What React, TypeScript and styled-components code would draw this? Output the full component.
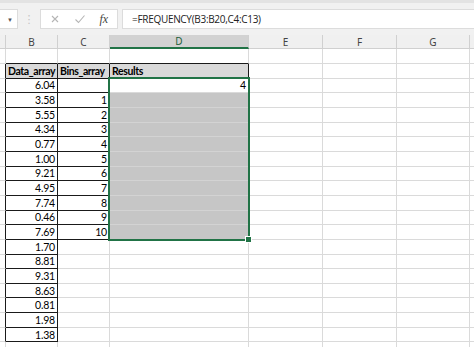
import styled, { createGlobalStyle } from "styled-components";

const GlobalStyle = createGlobalStyle`
  html, body {
    margin: 0;
    padding: 0;
    background: #fff;
    overflow: hidden;
  }
  body {
    font-family: Lato, "Liberation Sans", sans-serif;
  }
`;

const COLS = ["", "B", "C", "D", "E", "F", "G", ""];
const WIDTHS = [6, 52, 52, 139, 74, 74, 73];
const HEAD_H = 14.33;
const ROW_H = 14.67;
const ROWS = 21;

const dataArray = [
  "6.04", "3.58", "5.55", "4.34", "0.77", "1.00", "9.21", "4.95", "7.74",
  "0.46", "7.69", "1.70", "8.81", "9.31", "8.63", "0.81", "1.98", "1.38",
];

type CellInfo = { text?: string; bold?: boolean; header?: boolean; boxed?: boolean; selected?: boolean };

// row index 1-based like the sheet, col index into COLS
const cellAt = (r: number, c: number): CellInfo => {
  if (c === 1) {
    if (r === 2) return { text: "Data_array", bold: true, header: true, boxed: true };
    if (r >= 3 && r <= 20) return { text: dataArray[r - 3], boxed: true };
  }
  if (c === 2) {
    if (r === 2) return { text: "Bins_array", bold: true, header: true, boxed: true };
    if (r === 3) return { boxed: true };
    if (r >= 4 && r <= 13) return { text: String(r - 3), boxed: true };
  }
  if (c === 3) {
    if (r === 2) return { text: "Results", bold: true, header: true, boxed: true };
    if (r === 3) return { text: "4" };
    if (r >= 4 && r <= 13) return { selected: true };
  }
  return {};
};

const Window = styled.div`
  width: 474px;
  height: 347px;
  display: flex;
  flex-direction: column;
  overflow: hidden;
  background: #fff;
`;

const TopStrip = styled.div`
  flex-shrink: 0;
  height: 3px;
  background: #e3e3e3;
`;

const FormulaBar = styled.div`
  flex-shrink: 0;
  height: 32px;
  display: flex;
  align-items: center;
  background: #f1f1f1;
`;

const NameBox = styled.div`
  width: 18px;
  height: 20px;
  background: #fff;
  border: 1px solid #dcdcdc;
  border-left: none;
  box-sizing: border-box;
  display: flex;
  align-items: center;
  justify-content: flex-end;
  padding-right: 4px;
  font-size: 6px;
  color: #555;
`;

const Grip = styled.div`
  width: 22px;
  text-align: center;
  color: #c4c4c4;
  font-size: 11px;
  font-family: "DejaVu Sans", sans-serif;
`;

const FxBox = styled.div`
  width: 78px;
  height: 20px;
  background: #fff;
  border: 1px solid #dcdcdc;
  box-sizing: border-box;
  display: flex;
  align-items: center;
  justify-content: space-around;
  padding: 0 2px;
`;

const FxIcon = styled.span`
  font-family: "Liberation Serif", serif;
  font-style: italic;
  font-size: 12px;
  color: #444;
`;

const FormulaInput = styled.div`
  flex: 1;
  height: 20px;
  margin-left: 4px;
  background: #fff;
  border: 1px solid #dcdcdc;
  border-right: none;
  box-sizing: border-box;
  display: flex;
  align-items: center;
  padding-left: 9px;
  font-family: "Open Sans", sans-serif;
  font-size: 10px;
  letter-spacing: -0.3px;
  color: #222;
`;

const SheetWrap = styled.div`
  position: relative;
  flex: 1;
`;

const Sheet = styled.div`
  display: grid;
  grid-template-columns: ${WIDTHS.map((w) => `${w}px`).join(" ")} 1fr;
  grid-template-rows: ${HEAD_H}px;
  grid-auto-rows: ${ROW_H}px;
`;

const ColHead = styled.div<{ $active?: boolean }>`
  box-sizing: border-box;
  background: ${(p) => (p.$active ? "#d2d2d2" : "#f0f0f0")};
  border-right: 1px solid #d0d0d0;
  border-bottom: ${(p) => (p.$active ? "2px solid #217346" : "1px solid #d0d0d0")};
  display: flex;
  align-items: center;
  justify-content: center;
  font-family: "Noto Sans", sans-serif;
  font-size: 10px;
  color: ${(p) => (p.$active ? "#1e5e3a" : "#444")};
`;

const Cell = styled.div<{
  $right: string;
  $bottom: string;
  $fill: string;
  $bold?: boolean;
  $left?: boolean;
}>`
  box-sizing: border-box;
  background: ${(p) => p.$fill};
  border-right: 1px solid ${(p) => p.$right};
  border-bottom: 1px solid ${(p) => p.$bottom};
  display: flex;
  align-items: center;
  justify-content: ${(p) => (p.$left ? "flex-start" : "flex-end")};
  padding: 0 2px;
  font-size: 10.5px;
  font-weight: ${(p) => (p.$bold ? 700 : 400)};
  color: #000;
  white-space: nowrap;
  overflow: hidden;
  letter-spacing: ${(p) => (p.$bold ? "-0.4px" : "-0.2px")};
`;

const Selection = styled.div`
  position: absolute;
  box-sizing: border-box;
  border: 2px solid #217346;
  pointer-events: none;
`;

const FillHandle = styled.div`
  position: absolute;
  right: -4px;
  bottom: -4px;
  width: 5px;
  height: 5px;
  background: #217346;
  border: 1px solid #fff;
`;

const GRID = "#dadada";
const DARK = "#1a1a1a";

const App = () => {
  const rows = [];
  for (let r = 1; r <= ROWS; r++) {
    for (let c = 0; c < COLS.length; c++) {
      const info = cellAt(r, c);
      const rightBoxed = info.boxed || cellAt(r, c + 1).boxed;
      const belowBoxed = info.boxed || cellAt(r + 1, c).boxed;
      const lineColor = info.selected ? "#d3d3d3" : GRID;
      const fill = info.selected ? "#c6c6c6" : info.header ? "#d9d9d9" : "#fff";
      rows.push(
        <Cell
          key={`${r}-${c}`}
          $right={rightBoxed ? DARK : lineColor}
          $bottom={belowBoxed ? DARK : lineColor}
          $fill={fill}
          $bold={info.bold}
          $left={info.header}
        >
          {info.text}
        </Cell>
      );
    }
  }

  const selLeft = WIDTHS[0] + WIDTHS[1] + WIDTHS[2] - 2;
  const selTop = HEAD_H + 2 * ROW_H - 1.5;

  return (
    <Window>
      <GlobalStyle />
      <TopStrip />
      <FormulaBar>
        <NameBox>▼</NameBox>
        <Grip>⋮</Grip>
        <FxBox>
          <svg width="10" height="10" viewBox="0 0 10 10">
            <path d="M2 2 L8 8 M8 2 L2 8" stroke="#b5b5b5" strokeWidth="1.1" fill="none" />
          </svg>
          <svg width="12" height="10" viewBox="0 0 12 10">
            <path d="M1.5 5.5 L4.5 8.5 L10.5 1.5" stroke="#b5b5b5" strokeWidth="1.1" fill="none" />
          </svg>
          <FxIcon>fx</FxIcon>
        </FxBox>
        <FormulaInput>=FREQUENCY(B3:B20,C4:C13)</FormulaInput>
      </FormulaBar>
      <SheetWrap>
        <Sheet>
          {COLS.map((name, i) => (
            <ColHead key={`h${i}`} $active={name === "D"}>
              {name}
            </ColHead>
          ))}
          {rows}
        </Sheet>
        <Selection
          style={{
            left: selLeft,
            top: selTop,
            width: WIDTHS[3] + 3,
            height: 11 * ROW_H + 2.5,
          }}
        >
          <FillHandle />
        </Selection>
      </SheetWrap>
    </Window>
  );
};

export default App;
